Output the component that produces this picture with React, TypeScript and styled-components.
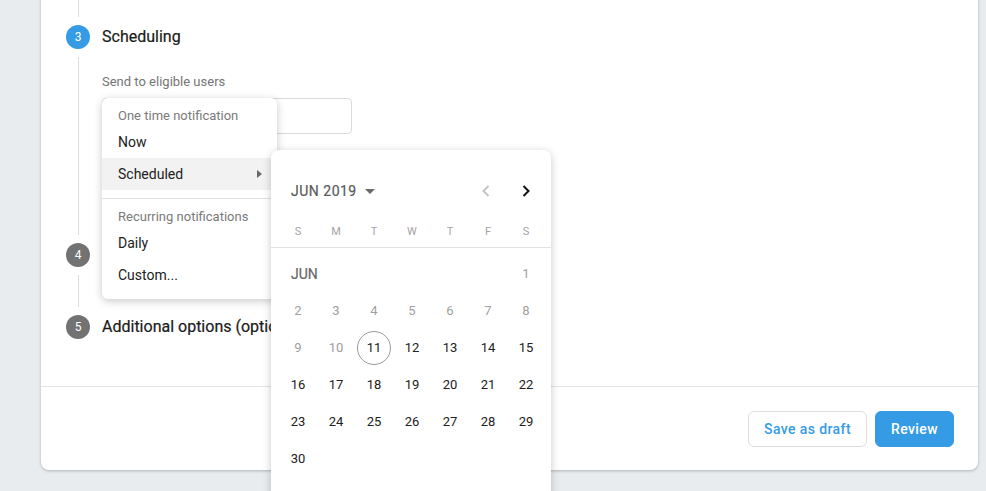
import React from "react";
import styled, { createGlobalStyle } from "styled-components";

const GlobalStyle = createGlobalStyle`
  html, body {
    margin: 0;
    padding: 0;
    background: #e9ecef;
    font-family: Roboto, "Liberation Sans", sans-serif;
  }
  html { overflow: hidden; }
  * { box-sizing: border-box; }
`;

const Page = styled.div`
  height: 491px;
  overflow: hidden;
  padding: 0 8px 0 41px;
`;

const Card = styled.div`
  margin-top: -40px;
  width: 937px;
  background: #fff;
  border-radius: 8px;
  box-shadow: 0 1px 3px rgba(0, 0, 0, 0.25);
`;

const Steps = styled.div`
  padding: 0 24px 47px 25px;
`;

const Step = styled.div`
  display: grid;
  grid-template-columns: 24px 1fr;
  column-gap: 12px;
`;

const Circle = styled.div<{ $active?: boolean }>`
  width: 24px;
  height: 24px;
  border-radius: 50%;
  background: ${(p) => (p.$active ? "#359be5" : "#727272")};
  color: #fff;
  font-size: 12px;
  display: flex;
  align-items: center;
  justify-content: center;
`;

const Title = styled.div`
  font-size: 16px;
  font-weight: 400;
  color: #1a1a1a;
  line-height: 24px;
  white-space: nowrap;
  -webkit-text-stroke: 0.2px #1a1a1a;
`;

const Rail = styled.div<{ $h: number }>`
  height: ${(p) => p.$h}px;
  display: flex;
  justify-content: center;
  padding: 8px 0;
  &::after {
    content: "";
    width: 1px;
    background: #dcdcdc;
  }
`;

const Body = styled.div`
  position: relative;
`;

const FieldLabel = styled.div`
  margin-top: 25px;
  font-size: 13px;
  line-height: 16px;
  color: #757575;
`;

const SelectWrap = styled.div`
  position: relative;
  margin-top: 8px;
  width: 250px;
`;

const SelectBox = styled.div`
  height: 36px;
  border: 1px solid #dadada;
  border-radius: 4px;
`;

const Menu = styled.div`
  position: absolute;
  top: 0;
  left: 0;
  width: 175px;
  padding: 8px 0;
  background: #fff;
  border-radius: 6px;
  box-shadow: 0 2px 8px rgba(0, 0, 0, 0.22);
  z-index: 2;
`;

const MenuHeader = styled.div`
  height: 20px;
  line-height: 20px;
  padding: 0 16px;
  font-size: 13px;
  color: #7a7a7a;
`;

const MenuItem = styled.div<{ $hover?: boolean }>`
  height: 32px;
  padding: 0 15px 0 16px;
  display: flex;
  align-items: center;
  justify-content: space-between;
  font-size: 14px;
  color: #212121;
  background: ${(p) => (p.$hover ? "#f2f2f2" : "transparent")};
`;

const Caret = styled.span`
  width: 0;
  height: 0;
  border-top: 4px solid transparent;
  border-bottom: 4px solid transparent;
  border-left: 5px solid #6a6a6a;
`;

const MenuDivider = styled.div`
  height: 1px;
  background: #e2e2e2;
  margin: 8px 0;
`;

const Calendar = styled.div`
  position: absolute;
  left: 169px;
  top: 52px;
  width: 280px;
  height: 380px;
  background: #fff;
  border-radius: 8px;
  box-shadow: 0 2px 8px rgba(0, 0, 0, 0.22);
  z-index: 3;
`;

const CalHeader = styled.div`
  display: flex;
  align-items: center;
  height: 34px;
  margin-top: 24px;
  padding: 0 13px 0 20px;
`;

const MonthLabel = styled.div`
  display: flex;
  align-items: center;
  gap: 8px;
  font-size: 14px;
  font-weight: 400;
  letter-spacing: 0.5px;
  color: #5a5a5a;
  -webkit-text-stroke: 0.2px #5a5a5a;
  flex: 1;
`;

const DownCaret = styled.span`
  width: 0;
  height: 0;
  border-left: 5px solid transparent;
  border-right: 5px solid transparent;
  border-top: 5px solid #6a6a6a;
  margin-top: 1px;
`;

const NavButtons = styled.div`
  display: flex;
  gap: 16px;
`;

const WeekRow = styled.div`
  display: grid;
  grid-template-columns: repeat(7, 38px);
  height: 32px;
  margin-top: 8px;
  align-items: center;
  padding-left: 8px;
  font-size: 11px;
  color: #a3a3a3;
  border-bottom: 1px solid #e2e2e2;
  & > span {
    text-align: center;
  }
`;

const DayGrid = styled.div`
  display: grid;
  grid-template-columns: repeat(7, 38px);
  grid-auto-rows: 37px;
  padding: 7px 0 0 8px;
`;

const Day = styled.div<{ $muted?: boolean; $today?: boolean }>`
  display: flex;
  align-items: center;
  justify-content: center;
  font-size: 13px;
  color: ${(p) => (p.$muted ? "#a0a0a0" : "#212121")};
  & > span {
    width: 34px;
    height: 34px;
    border-radius: 50%;
    display: flex;
    align-items: center;
    justify-content: center;
    border: 1px solid ${(p) => (p.$today ? "#9a9a9a" : "transparent")};
  }
`;

const MonthTag = styled.div`
  grid-column: span 6;
  display: flex;
  align-items: center;
  padding-left: 12px;
  font-size: 14px;
  font-weight: 400;
  color: #666;
  -webkit-text-stroke: 0.2px #666;
`;

const Footer = styled.div`
  border-top: 1px solid #e4e4e4;
  height: 84px;
  display: flex;
  align-items: center;
  justify-content: flex-end;
  gap: 8px;
  padding: 0 24px 0;
`;

const Button = styled.button<{ $primary?: boolean }>`
  height: 36px;
  padding: 0 15px;
  border-radius: 6px;
  font-family: Roboto, "Liberation Sans", sans-serif;
  font-size: 14px;
  font-weight: 500;
  letter-spacing: 0.4px;
  border: 1px solid ${(p) => (p.$primary ? "#359be5" : "#dedede")};
  background: ${(p) => (p.$primary ? "#359be5" : "#fff")};
  color: ${(p) => (p.$primary ? "#fff" : "#359be5")};
`;

const Chevron = ({ dir, color }: { dir: "left" | "right"; color: string }) => (
  <svg width="24" height="24" viewBox="0 0 24 24" fill="none">
    <path
      d={dir === "left" ? "M14.5 7l-5 5 5 5" : "M9.5 7l5 5-5 5"}
      stroke={color}
      strokeWidth="2"
    />
  </svg>
);

const App = () => {
  const days = Array.from({ length: 29 }, (_, i) => i + 2);
  return (
    <Page>
      <GlobalStyle />
      <Card>
        <Steps>
          <Step>
            <Rail $h={65} />
            <div />
          </Step>
          <Step>
            <Circle $active>3</Circle>
            <Title>Scheduling</Title>
            <Rail $h={194} />
            <Body>
              <FieldLabel>Send to eligible users</FieldLabel>
              <SelectWrap>
                <SelectBox />
                <Menu>
                  <MenuHeader>One time notification</MenuHeader>
                  <MenuItem>Now</MenuItem>
                  <MenuItem $hover>
                    Scheduled <Caret />
                  </MenuItem>
                  <MenuDivider />
                  <MenuHeader>Recurring notifications</MenuHeader>
                  <MenuItem>Daily</MenuItem>
                  <MenuItem>Custom...</MenuItem>
                </Menu>
                <Calendar>
                  <CalHeader>
                    <MonthLabel>
                      JUN 2019 <DownCaret />
                    </MonthLabel>
                    <NavButtons>
                      <Chevron dir="left" color="#c4c4c4" />
                      <Chevron dir="right" color="#111" />
                    </NavButtons>
                  </CalHeader>
                  <WeekRow>
                    {["S", "M", "T", "W", "T", "F", "S"].map((d, i) => (
                      <span key={i}>{d}</span>
                    ))}
                  </WeekRow>
                  <DayGrid>
                    <MonthTag>JUN</MonthTag>
                    <Day $muted>
                      <span>1</span>
                    </Day>
                    {days.map((d) => (
                      <Day key={d} $muted={d < 11} $today={d === 11}>
                        <span>{d}</span>
                      </Day>
                    ))}
                  </DayGrid>
                </Calendar>
              </SelectWrap>
            </Body>
          </Step>
          <Step>
            <Circle>4</Circle>
            <Title>Conversion</Title>
            <Rail $h={48} />
            <div />
          </Step>
          <Step>
            <Circle>5</Circle>
            <Title>Additional options (optional)</Title>
          </Step>
        </Steps>
        <Footer>
          <Button>Save as draft</Button>
          <Button $primary>Review</Button>
        </Footer>
      </Card>
    </Page>
  );
};

export default App;
